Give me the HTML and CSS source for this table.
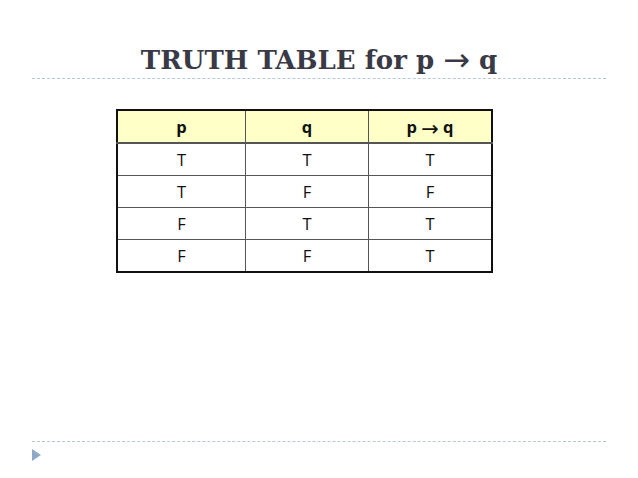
FILE: index.html
```html
<!DOCTYPE html>
<html>
<head>
<meta charset="utf-8">
<link rel="stylesheet" href="styles.css">
</head>
<body>
<div class="slide">
  <h1 class="title">TRUTH TABLE for p <span class="arrow">&rarr;</span> q</h1>
  <div class="rule"></div>
  <div class="content">
    <table class="truth">
      <thead>
        <tr><th>p</th><th>q</th><th>p <span class="harrow">&rarr;</span> q</th></tr>
      </thead>
      <tbody>
        <tr><td>T</td><td>T</td><td>T</td></tr>
        <tr><td>T</td><td>F</td><td>F</td></tr>
        <tr><td>F</td><td>T</td><td>T</td></tr>
        <tr><td>F</td><td>F</td><td>T</td></tr>
      </tbody>
    </table>
  </div>
  <div class="rule"></div>
  <div class="footer"><span class="tri"></span></div>
</div>
</body>
</html>
```
FILE: styles.css
```css
html, body {
  margin: 0;
  padding: 0;
  background: #ffffff;
}
.slide {
  width: 638px;
  height: 478px;
  display: flex;
  flex-direction: column;
  padding: 0 32px;
  box-sizing: border-box;
}
.title {
  margin: 0;
  padding-top: 44px;
  height: 34px;
  font-family: "DejaVu Serif", serif;
  font-weight: bold;
  font-size: 26px;
  line-height: 32px;
  color: #3a3a46;
  text-align: center;
}
.arrow {
  font-family: "DejaVu Sans", sans-serif;
  font-weight: normal;
  font-size: 32px;
  line-height: 0;
  vertical-align: -2px;
}
.rule {
  width: 574px;
  height: 0;
  border-top: 1px dashed #b9c6d6;
}
.content {
  height: 362px;
  padding-top: 30px;
  padding-left: 84px;
  box-sizing: border-box;
}
.truth {
  border-collapse: collapse;
  border: 2px solid #111111;
  font-family: "Open Sans", sans-serif;
  font-size: 16.5px;
  font-weight: normal;
  color: #111111;
}
.truth th, .truth td {
  border: 1px solid #555555;
  height: 31px;
  padding: 0;
  text-align: center;
  line-height: 20px;
}
.truth th {
  background: #ffffc8;
  font-weight: bold;
  font-size: 16.5px;
  border-bottom: 2px solid #555555;
}
.harrow {
  font-family: "DejaVu Sans", sans-serif;
  font-weight: normal;
  font-size: 21px;
  line-height: 0;
  vertical-align: -3px;
}
.truth th:nth-child(1), .truth td:nth-child(1) { width: 127px; }
.truth th:nth-child(2), .truth td:nth-child(2) { width: 122px; }
.truth th:nth-child(3), .truth td:nth-child(3) { width: 122px; }
.footer {
  padding-top: 7px;
}
.tri {
  display: block;
  width: 0;
  height: 0;
  border-top: 6px solid transparent;
  border-bottom: 6px solid transparent;
  border-left: 9px solid #8ea9c8;
}
```
